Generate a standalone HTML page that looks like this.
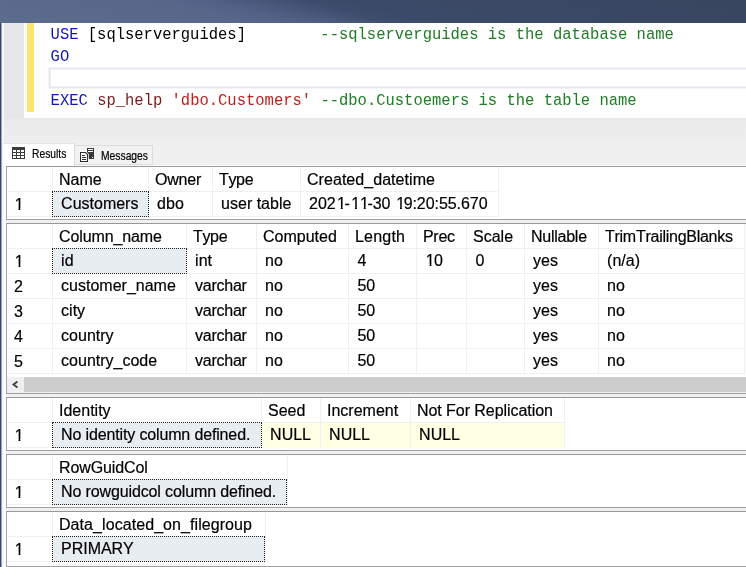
<!DOCTYPE html>
<html lang="en">
<head>
<meta charset="utf-8">
<title>sp_help results</title>
<style>
html,body{margin:0;padding:0;}
body{width:746px;height:567px;overflow:hidden;background:#fff;position:relative;font-family:"Liberation Sans",sans-serif;}
.root{position:absolute;left:0;top:0;width:746px;height:567px;overflow:hidden;will-change:transform;}
.a{position:absolute;}
.hdr{left:0;top:0;width:746px;height:23px;background:linear-gradient(14deg,#5c6c8d 0%,#57678a 30%,#516186 36%,#475779 42%,#3e4d6d 47%,#3b4a68 52%,#38465f 100%);}
.ls0{left:0;top:23px;width:1px;height:544px;background:#36456a;}
.ls1{left:1px;top:23px;width:1px;height:544px;background:#9aa5be;}
.ls2{left:2px;top:23px;width:2px;height:544px;background:linear-gradient(90deg,#eef1f7,#fbfcfd);}
.margin{left:4px;top:23px;width:20px;height:95px;background:#e6e7e8;}
.editor{left:24px;top:23px;width:722px;height:95px;background:#fff;}
.ybar{left:27px;top:23px;width:7px;height:89px;background:#f9e76c;}
.curline{left:49px;top:68px;width:700px;height:20px;border:1px solid #e3e3ee;box-sizing:border-box;box-shadow:0 0 0 1px rgba(228,228,240,0.4),inset 0 0 0 1px rgba(228,228,240,0.4);}
.band{left:4px;top:118px;width:742px;height:26px;background:linear-gradient(180deg,#eaeaea 0%,#ececec 60%,#f0f0f0 100%);}
.code{font-family:"Liberation Mono",monospace;font-size:15.51px;line-height:22px;height:22px;white-space:pre;left:50.6px;color:#000;transform:scaleY(1.05);transform-origin:0 15px;}
.kw{color:#1616b4;}
.st{color:#be2020;}
.cm{color:#1f7d24;}
.sp{color:#7a1c1c;}
.tabbar{left:4px;top:144px;width:742px;height:22px;background:#f0f0f0;}
.tab1{left:3px;top:143px;width:72px;height:23px;background:#fff;border-top:1px solid #e4e4e4;border-right:1px solid #dedede;box-sizing:border-box;}
.tab2{left:74px;top:145px;width:79px;height:20px;background:#f2f2f2;border:1px solid #dcdcdc;box-sizing:border-box;}
.tabt{font-size:12.2px;line-height:14px;height:14px;color:#000;white-space:pre;transform-origin:0 0;-webkit-text-stroke:0.2px #000;}
.t{font-size:16px;line-height:18px;height:18px;white-space:pre;color:#000;font-kerning:none;-webkit-text-stroke:0.2px #000;}
.o{display:inline-block;position:relative;left:0.6px;clip-path:polygon(0 0,100% 0,100% 12px,5.7px 12px,5.7px 100%,3.8px 100%,3.8px 12px,0 12px);}
.o2{left:1.4px;}
.vl{width:1px;background:#f0f0f0;}
.hl{height:1px;background:#f0f0f0;}
.sel{background:#e8edf2;border:1px dotted #222;box-sizing:border-box;}
.nul{background:#ffffe4;}
.bl{height:1px;background:#999999;left:6px;width:740px;}
.bb{height:1px;background:#a0a0a0;left:6px;width:740px;}
.gap{left:6px;width:740px;height:3px;background:#f0f0f0;}
</style>
</head>
<body>
<div class="root">
<div class="a hdr"></div>
<div class="a ls0"></div>
<div class="a ls1"></div>
<div class="a ls2"></div>
<div class="a margin"></div>
<div class="a editor"></div>
<div class="a ybar"></div>
<div class="a curline"></div>
<div class="a band"></div>
<div class="a code" style="top:24px"><span class="kw">USE</span> [sqlserverguides]        <span class="cm">--sqlserverguides is the database name</span></div>
<div class="a code" style="top:46px"><span class="kw">GO</span></div>
<div class="a code" style="top:90px"><span class="kw">EXEC</span> <span class="sp">sp_help</span> <span class="st">'dbo.Customers'</span> <span class="cm">--dbo.Custoemers is the table name</span></div>
<div class="a tabbar"></div>
<div class="a" style="left:4px;top:165px;width:742px;height:1px;background:#fbfbfb"></div>
<div class="a tab1"></div>
<div class="a tab2"></div>
<svg class="a" style="left:12px;top:147px" width="13" height="12" viewBox="0 0 13 12"><rect x="0" y="0" width="13" height="12" fill="#3c3c3c"/><g fill="#fff"><rect x="1" y="3" width="3" height="2"/><rect x="5" y="3" width="3" height="2"/><rect x="9" y="3" width="3" height="2"/><rect x="1" y="6" width="3" height="2"/><rect x="5" y="6" width="3" height="2"/><rect x="9" y="6" width="3" height="2"/><rect x="1" y="9" width="3" height="2"/><rect x="5" y="9" width="3" height="2"/><rect x="9" y="9" width="3" height="2"/></g></svg>
<div class="a tabt" style="left:31.75px;top:147px;transform:scaleX(0.8431)">Results</div>
<svg class="a" style="left:80px;top:148px" width="15" height="14" viewBox="0 0 15 14"><rect x="7" y="0" width="7" height="11" fill="#3a3a3a"/><rect x="8" y="1" width="5" height="1" fill="#fff"/><rect x="8" y="3" width="5" height="1" fill="#fff"/><rect x="12" y="9" width="1" height="1" fill="#fff"/><path d="M0.5 4.5 H5.5 L7.5 6.5 V13.5 H0.5 Z" fill="#fff" stroke="#fff" stroke-width="2.6"/><path d="M0.5 4.5 H5.5 L7.5 6.5 V13.5 H0.5 Z" fill="#fff" stroke="#2e2e2e" stroke-width="1.1"/><path d="M2 7.5h3M2 9.5h4M2 11.5h4" stroke="#2e2e2e" stroke-width="1" shape-rendering="crispEdges"/></svg>
<div class="a tabt" style="left:101.00px;top:149px;transform:scaleX(0.8461)">Messages</div>
<div class="a bl" style="top:166px"></div>
<div class="a" style="left:6px;top:166px;width:1px;height:401px;background:#a4a4a8"></div>
<div class="a hl" style="left:7px;top:191px;width:492px"></div>
<div class="a hl" style="left:7px;top:216px;width:492px"></div>
<div class="a vl" style="left:52px;top:167px;height:50px"></div>
<div class="a vl" style="left:148px;top:167px;height:50px"></div>
<div class="a vl" style="left:212px;top:167px;height:50px"></div>
<div class="a vl" style="left:300px;top:167px;height:50px"></div>
<div class="a vl" style="left:498px;top:167px;height:50px"></div>
<div class="a sel" style="left:52px;top:191px;width:97px;height:26px"></div>
<div class="a t" style="left:14.1px;top:196px"><span class="o">1</span></div>
<div class="a t" style="left:59px;top:171px">Name</div>
<div class="a t" style="left:61.1px;top:195px">Customers</div>
<div class="a t" style="left:155px;top:171px;letter-spacing:-0.2px">Owner</div>
<div class="a t" style="left:157.1px;top:195px">dbo</div>
<div class="a t" style="left:219px;top:171px;letter-spacing:-0.3333px">Type</div>
<div class="a t" style="left:221.1px;top:195px">user table</div>
<div class="a t" style="left:307px;top:171px;letter-spacing:0.05px">Created_datetime</div>
<div class="a t" style="left:309.1px;top:195px;letter-spacing:-0.0568px">202<span class="o o2">1</span>-<span class="o o2">1</span><span class="o o2">1</span>-30 <span class="o o2">1</span>9:20:55.670</div>
<div class="a bb" style="top:219px"></div>
<div class="a gap" style="top:220px"></div>
<div class="a bl" style="top:223px"></div>
<div class="a hl" style="left:7px;top:248px;width:738px"></div>
<div class="a hl" style="left:7px;top:273px;width:738px"></div>
<div class="a hl" style="left:7px;top:298px;width:738px"></div>
<div class="a hl" style="left:7px;top:323px;width:738px"></div>
<div class="a hl" style="left:7px;top:348px;width:738px"></div>
<div class="a hl" style="left:7px;top:373px;width:738px"></div>
<div class="a vl" style="left:52px;top:224px;height:150px"></div>
<div class="a vl" style="left:186px;top:224px;height:150px"></div>
<div class="a vl" style="left:256px;top:224px;height:150px"></div>
<div class="a vl" style="left:348px;top:224px;height:150px"></div>
<div class="a vl" style="left:416px;top:224px;height:150px"></div>
<div class="a vl" style="left:466px;top:224px;height:150px"></div>
<div class="a vl" style="left:524px;top:224px;height:150px"></div>
<div class="a vl" style="left:598px;top:224px;height:150px"></div>
<div class="a vl" style="left:744px;top:224px;height:150px"></div>
<div class="a sel" style="left:52px;top:248px;width:135px;height:26px"></div>
<div class="a t" style="left:14.1px;top:253px"><span class="o">1</span></div>
<div class="a t" style="left:14.1px;top:278px">2</div>
<div class="a t" style="left:14.1px;top:303px">3</div>
<div class="a t" style="left:14.1px;top:328px">4</div>
<div class="a t" style="left:14.1px;top:353px">5</div>
<div class="a t" style="left:59px;top:228px;letter-spacing:-0.12px">Column_name</div>
<div class="a t" style="left:61.1px;top:252px">id</div>
<div class="a t" style="left:61.1px;top:277px">customer_name</div>
<div class="a t" style="left:61.1px;top:302px">city</div>
<div class="a t" style="left:61.1px;top:327px">country</div>
<div class="a t" style="left:61.1px;top:352px">country_code</div>
<div class="a t" style="left:193px;top:228px;letter-spacing:-0.3333px">Type</div>
<div class="a t" style="left:195.1px;top:252px">int</div>
<div class="a t" style="left:195.1px;top:277px;letter-spacing:-0.25px">varchar</div>
<div class="a t" style="left:195.1px;top:302px;letter-spacing:-0.25px">varchar</div>
<div class="a t" style="left:195.1px;top:327px;letter-spacing:-0.25px">varchar</div>
<div class="a t" style="left:195.1px;top:352px;letter-spacing:-0.25px">varchar</div>
<div class="a t" style="left:263px;top:228px">Computed</div>
<div class="a t" style="left:265.1px;top:252px">no</div>
<div class="a t" style="left:265.1px;top:277px">no</div>
<div class="a t" style="left:265.1px;top:302px">no</div>
<div class="a t" style="left:265.1px;top:327px">no</div>
<div class="a t" style="left:265.1px;top:352px">no</div>
<div class="a t" style="left:355px;top:228px;letter-spacing:0.2px">Length</div>
<div class="a t" style="left:357.4px;top:252px">4</div>
<div class="a t" style="left:357.4px;top:277px">50</div>
<div class="a t" style="left:357.4px;top:302px">50</div>
<div class="a t" style="left:357.4px;top:327px">50</div>
<div class="a t" style="left:357.4px;top:352px">50</div>
<div class="a t" style="left:423px;top:228px;letter-spacing:-0.3px">Prec</div>
<div class="a t" style="left:425.2px;top:252px"><span class="o">1</span>0</div>
<div class="a t" style="left:473px;top:228px">Scale</div>
<div class="a t" style="left:475.6px;top:252px">0</div>
<div class="a t" style="left:531px;top:228px;letter-spacing:-0.25px">Nullable</div>
<div class="a t" style="left:533.1px;top:252px">yes</div>
<div class="a t" style="left:533.1px;top:277px">yes</div>
<div class="a t" style="left:533.1px;top:302px">yes</div>
<div class="a t" style="left:533.1px;top:327px">yes</div>
<div class="a t" style="left:533.1px;top:352px">yes</div>
<div class="a t" style="left:605px;top:228px;letter-spacing:-0.2635px">TrimTrailingBlanks</div>
<div class="a t" style="left:607.1px;top:252px">(n/a)</div>
<div class="a t" style="left:607.1px;top:277px">no</div>
<div class="a t" style="left:607.1px;top:302px">no</div>
<div class="a t" style="left:607.1px;top:327px">no</div>
<div class="a t" style="left:607.1px;top:352px">no</div>
<div class="a" style="left:7px;top:377px;width:739px;height:16px;background:#f0f0f0"></div>
<div class="a" style="left:24px;top:377px;width:722px;height:15px;background:#cdcdcd"></div>
<svg class="a" style="left:11px;top:380px" width="8" height="10" viewBox="0 0 8 10"><path d="M6.5 1.5 L2.5 4.5 L6.5 7.5" fill="none" stroke="#444" stroke-width="1.9"/></svg>
<div class="a bb" style="top:393px"></div>
<div class="a gap" style="top:394px"></div>
<div class="a bl" style="top:397px"></div>
<div class="a hl" style="left:7px;top:422px;width:558px"></div>
<div class="a hl" style="left:7px;top:447px;width:558px"></div>
<div class="a vl" style="left:52px;top:398px;height:50px"></div>
<div class="a vl" style="left:261px;top:398px;height:50px"></div>
<div class="a vl" style="left:320px;top:398px;height:50px"></div>
<div class="a vl" style="left:410px;top:398px;height:50px"></div>
<div class="a vl" style="left:564px;top:398px;height:50px"></div>
<div class="a sel" style="left:52px;top:422px;width:210px;height:26px"></div>
<div class="a nul" style="left:262px;top:423px;width:58px;height:25px"></div>
<div class="a nul" style="left:321px;top:423px;width:89px;height:25px"></div>
<div class="a nul" style="left:411px;top:423px;width:153px;height:25px"></div>
<div class="a t" style="left:14.1px;top:427px"><span class="o">1</span></div>
<div class="a t" style="left:59px;top:402px">Identity</div>
<div class="a t" style="left:61.1px;top:426px;letter-spacing:-0.145px">No identity column defined.</div>
<div class="a t" style="left:268px;top:402px">Seed</div>
<div class="a t" style="left:270.1px;top:426px">NULL</div>
<div class="a t" style="left:327px;top:402px">Increment</div>
<div class="a t" style="left:329.1px;top:426px">NULL</div>
<div class="a t" style="left:417px;top:402px;letter-spacing:-0.055px">Not For Replication</div>
<div class="a t" style="left:419.1px;top:426px">NULL</div>
<div class="a bb" style="top:450px"></div>
<div class="a gap" style="top:451px"></div>
<div class="a bl" style="top:454px"></div>
<div class="a hl" style="left:7px;top:479px;width:281px"></div>
<div class="a hl" style="left:7px;top:504px;width:281px"></div>
<div class="a vl" style="left:52px;top:455px;height:50px"></div>
<div class="a vl" style="left:287px;top:455px;height:50px"></div>
<div class="a sel" style="left:52px;top:479px;width:235px;height:26px"></div>
<div class="a t" style="left:14.1px;top:484px"><span class="o">1</span></div>
<div class="a t" style="left:59px;top:459px;letter-spacing:-0.12px">RowGuidCol</div>
<div class="a t" style="left:61.1px;top:483px;letter-spacing:-0.13px">No rowguidcol column defined.</div>
<div class="a bb" style="top:507px"></div>
<div class="a gap" style="top:508px"></div>
<div class="a bl" style="top:511px"></div>
<div class="a hl" style="left:7px;top:536px;width:259px"></div>
<div class="a hl" style="left:7px;top:561px;width:259px"></div>
<div class="a vl" style="left:52px;top:512px;height:50px"></div>
<div class="a vl" style="left:265px;top:512px;height:50px"></div>
<div class="a sel" style="left:52px;top:536px;width:213px;height:26px"></div>
<div class="a t" style="left:14.1px;top:541px"><span class="o">1</span></div>
<div class="a t" style="left:59px;top:516px;letter-spacing:0.07px">Data_located_on_filegroup</div>
<div class="a t" style="left:61.1px;top:540px;letter-spacing:-0.0417px">PRIMARY</div>
<div class="a bb" style="top:566px"></div>
</div>
</body>
</html>
